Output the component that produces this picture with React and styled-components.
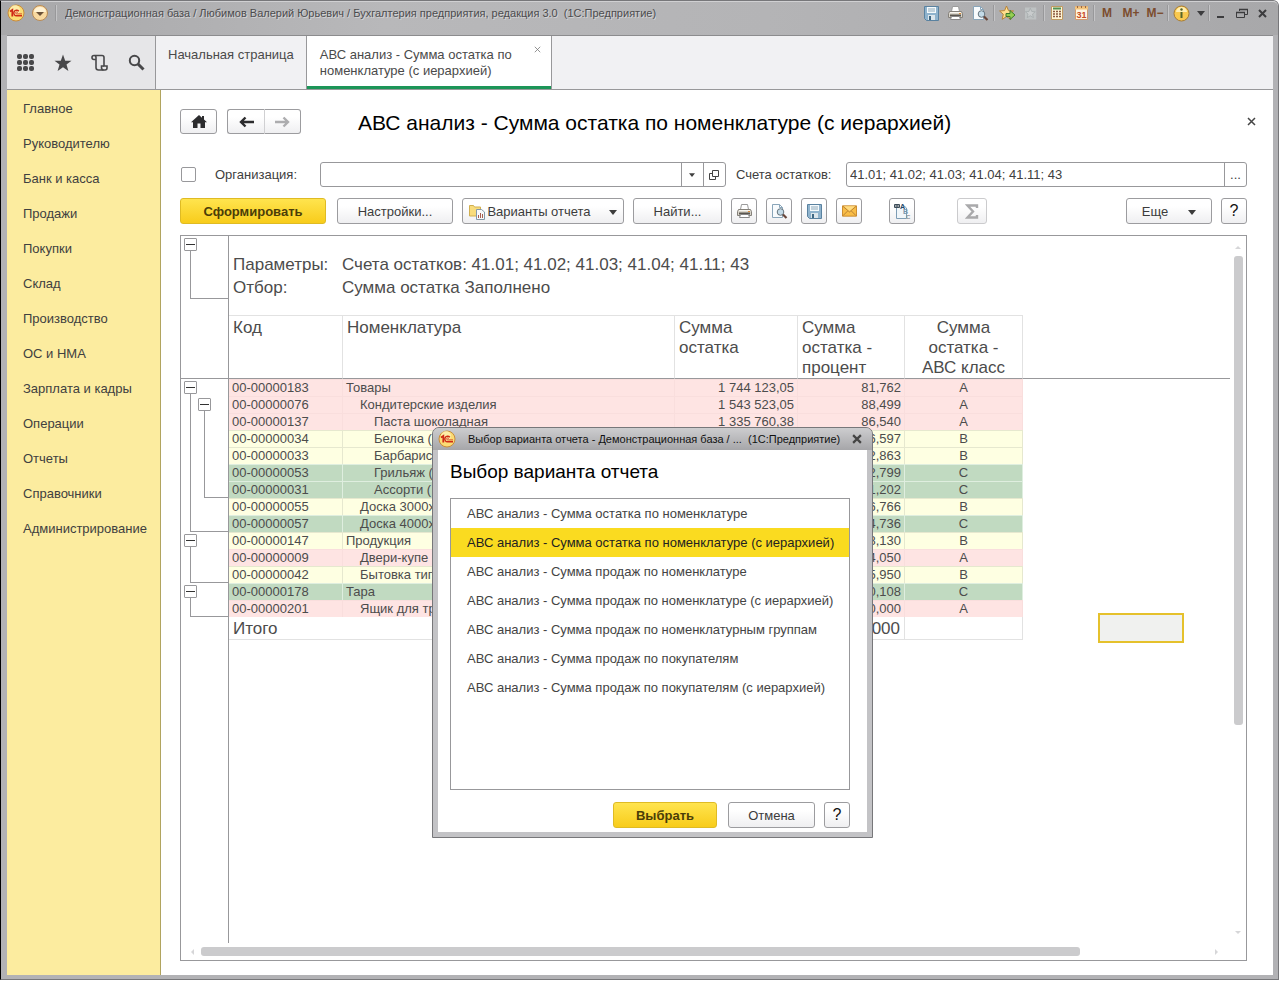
import React, { useState } from 'react';
import styled, { createGlobalStyle, css } from 'styled-components';

const GlobalStyle = createGlobalStyle`
  * {
    box-sizing: border-box;
  }

  body {
    margin: 0;
    background: #fff;
    color: #404040;
    font: 13px/16px 'Liberation Sans', Arial, sans-serif;
  }

  button,
  input {
    color: inherit;
    font: inherit;
  }
`;

const Window = styled.div`
  display: flex;
  flex-direction: column;
  min-height: calc(100vh - 4px);
  margin: 0 5px 4px 0;
  padding: 0 5px 4px 6px;
  background: #b2b2b5;
  border: 1px solid #77777a;
  border-left-color: #000;
  border-radius: 0 6px 0 0;
`;

const TitleBar = styled.header`
  display: flex;
  align-items: flex-start;
  justify-content: space-between;
  height: 34px;
  margin: 0 -5px 0 -6px;
  padding: 0 5px 0 6px;
  background: linear-gradient(90deg, #a8a8aa, #b8b8ba 30%, #b4b4b6 60%, #a8a8aa);
  border-top: 1px solid #d0d0d2;
  border-radius: 0 5px 0 0;
`;

const TitleGroup = styled.div`
  display: flex;
  align-items: center;
  height: 22px;
  min-width: 0;
`;

const WindowTitle = styled.span`
  margin-left: 8px;
  overflow: hidden;
  color: #4c4c4e;
  font-size: 11px;
  text-shadow: 1px 1px 0 #d4d4d6;
  white-space: nowrap;
`;

const TitleButton = styled.button`
  display: flex;
  flex: none;
  align-items: center;
  justify-content: center;
  width: ${({ $width }) => $width || 24}px;
  height: 22px;
  padding: 0;
  background: none;
  border: 0;
  color: #3c3c3e;
`;

const MemoryButton = styled(TitleButton)`
  color: #7b4c2e;
  font-size: 12px;
  font-weight: 700;
`;

const Separator = styled.span`
  flex: none;
  width: 2px;
  height: 16px;
  background: #98989a;
  border-right: 1px solid #c4c4c6;
`;

const TabBar = styled.nav`
  display: flex;
  height: 55px;
  background: #f1f1f3;
  border-top: 1px solid #8c8c8e;
  border-bottom: 1px solid #98989a;
`;

const QuickTools = styled.div`
  display: flex;
  align-items: center;
  width: 149px;
  background: #e6e6e8;
  border-right: 1px solid #98989a;
`;

const QuickButton = styled.button`
  display: flex;
  align-items: center;
  justify-content: center;
  width: 37px;
  height: 40px;
  padding: 0;
  background: none;
  border: 0;
  color: #48484a;
`;

const Tab = styled.a`
  display: flex;
  gap: 20px;
  align-items: flex-start;
  padding: 11px 12px;
  border-right: 1px solid #98989a;
  color: #4a4a4a;
  text-decoration: none;

  ${({ $active }) =>
    $active &&
    css`
      padding: 11px 10px 11px 13px;
      background: #fff;
      box-shadow: inset 0 -3px #1c9558;
    `}
`;

const TabText = styled.span`
  max-width: 194px;
`;

const TabClose = styled.span`
  margin-top: -6px;
  color: #777;
`;

const Body = styled.div`
  display: flex;
  flex: 1;
  background: #fff;
`;

const Sidebar = styled.nav`
  display: flex;
  flex: none;
  flex-direction: column;
  width: 154px;
  padding-top: 1px;
  background: #fcec9f;
  border-right: 1px solid #b1a45f;
`;

const SidebarLink = styled.a`
  padding-left: 16px;
  color: #404040;
  line-height: 35px;
  text-decoration: none;
`;

const Main = styled.main`
  display: flex;
  flex: 1;
  flex-direction: column;
  min-width: 0;
  padding: 19px 26px 14px 19px;
`;

const PageHeader = styled.div`
  display: flex;
  align-items: center;
  margin-right: -14px;
`;

const PageTitle = styled.h1`
  flex: 1;
  margin: 0 0 0 57px;
  padding-top: 2px;
  color: #000;
  font-size: 21px;
  font-weight: 400;
  line-height: 23px;
`;

const Button = styled.button`
  display: flex;
  flex: none;
  align-items: center;
  justify-content: center;
  gap: 2px;
  width: ${({ $width }) => $width || 26}px;
  height: ${({ $height }) => $height || 26}px;
  padding: 0;
  background: linear-gradient(#fff 30%, #efeff1);
  border: 1px solid ${({ disabled }) => (disabled ? '#cbcbcd' : '#9c9c9f')};
  border-radius: 3px;
  color: #3c3c3c;

  ${({ $primary }) =>
    $primary &&
    css`
      margin-right: 2px;
      background: linear-gradient(#ffe44e, #f8cc1b);
      border-color: #dfbb24;
      color: #4b3d08;
      font-weight: 700;
    `}
`;

const TextButton = styled(Button)`
  padding-top: 2px;
`;

const HelpButton = styled(Button)`
  color: #111;
  font-size: 16px;
`;

const HistoryButtons = styled.div`
  display: flex;
  margin-left: 10px;

  button:first-child {
    border-right-color: #d0d0d2;
    border-radius: 3px 0 0 3px;
  }

  button:last-child {
    border-color: #9c9c9f;
    border-left: 0;
    border-radius: 0 3px 3px 0;
  }
`;

const PlainButton = styled.button`
  display: flex;
  align-items: center;
  justify-content: center;
  width: 20px;
  height: 20px;
  padding: 0;
  background: none;
  border: 0;
  color: #444;
`;

const FilterRow = styled.div`
  display: flex;
  align-items: center;
  margin-top: 28px;
`;

const Checkbox = styled.input`
  width: 15px;
  height: 15px;
  margin: 0 0 0 1px;
  appearance: none;
  background: #fff;
  border: 1px solid #98989b;
  border-radius: 2px;
`;

const FieldLabel = styled.label`
  width: ${({ $width }) => $width}px;
  flex: none;
  margin-left: ${({ $gap }) => $gap}px;
`;

const Field = styled.div`
  display: flex;
  flex: ${({ $grow }) => $grow} 1 0;
  height: 25px;
  min-width: 0;
  border: 1px solid #98989b;
  border-radius: 3px;
`;

const FieldInput = styled.input`
  flex: 1;
  min-width: 0;
  padding: 0 3px;
  background: none;
  border: 0;
  outline: 0;
`;

const FieldButton = styled.button`
  display: flex;
  align-items: center;
  justify-content: center;
  width: 22px;
  padding: 0;
  background: none;
  border: 0;
  border-left: 1px solid #98989b;
`;

const Toolbar = styled.div`
  display: flex;
  align-items: center;
  gap: 9px;
  margin: 11px 0;
`;

const ToolbarGap = styled.span`
  flex: ${({ $grow }) => ($grow ? 1 : 'none')};
  width: ${({ $width }) => $width || 0}px;
`;

const DropText = styled.span`
  margin-right: ${({ $gap }) => $gap}px;
`;

const Frame = styled.section`
  display: grid;
  flex: 1;
  grid-template-rows: 1fr 17px;
  grid-template-columns: 48px 1fr 16px;
  border: 1px solid #98989b;
`;

const Gutter = styled.div`
  border-right: 1px solid #98989b;
`;

const GutterHead = styled.div`
  height: 143px;
  border-bottom: 1px solid #98989b;
`;

const Group = styled.div`
  display: flex;
  flex-direction: column;
  height: ${({ $height }) => $height}px;
  padding: 2px 0 0 ${({ $nested }) => ($nested ? 7 : 3)}px;
  margin-top: ${({ $nested }) => ($nested ? 2 : 0)}px;
`;

const Toggle = styled.button`
  display: flex;
  flex: none;
  align-items: center;
  width: 13px;
  height: 13px;
  padding: 0 1px;
  background: #fff;
  border: 1px solid #98989b;
  border-radius: 1px;

  &::before {
    width: 9px;
    height: 1px;
    background: #333;
    content: '';
  }
`;

const Branch = styled.div`
  flex: 1;
  margin-left: 6px;
  border: solid #98989b;
  border-width: 0 0 1px 1px;
`;

const Sheet = styled.div`
  position: relative;
  min-width: 0;
`;

const Params = styled.dl`
  display: grid;
  grid-template-columns: 109px 1fr;
  height: 79px;
  margin: 0;
  padding: 17px 4px;
  color: #4c4c4c;
  font-size: 17px;
  line-height: 23px;

  dd {
    margin: 0;
  }
`;

const Table = styled.table`
  width: 100%;
  border-spacing: 0;
  table-layout: fixed;
  color: #4c4c4c;
`;

const HeadCell = styled.th`
  height: 64px;
  padding: 2px 4px 0;
  border-top: 1px solid #e2e2e2;
  border-right: 1px solid #e2e2e2;
  border-bottom: 1px solid #98989b;
  font-size: 17px;
  font-weight: 400;
  line-height: 20px;
  text-align: ${({ $align }) => $align || 'left'};
  vertical-align: top;

  &:last-child {
    border-top: 0;
    border-right: 0;
  }
`;

const rowTones = {
  A: { background: '#fee4e3', line: '#f9dedd' },
  B: { background: '#feffe2', line: '#e6e8cf' },
  C: { background: '#c1dac1', line: '#dfeedf' },
};

const Row = styled.tr`
  td {
    height: 17px;
    padding: 0 3px;
    overflow: hidden;
    background: ${({ $tone }) => rowTones[$tone].background};
    border-top: 1px solid ${({ $tone }) => rowTones[$tone].line};
    border-right: 1px solid ${({ $tone }) => rowTones[$tone].line};
    line-height: 16px;
    white-space: nowrap;
  }

  td:last-child {
    background: none;
    border: 0;
  }
`;

const NameCell = styled.td`
  && {
    padding-left: ${({ $level }) => 3 + $level * 14}px;
  }
`;

const NumberCell = styled.td`
  text-align: right;
`;

const ClassCell = styled.td`
  text-align: center;
`;

const TotalRow = styled.tr`
  td {
    height: 23px;
    padding: 1px 4px 0;
    border-right: 1px solid #e2e2e2;
    border-bottom: 1px solid #e2e2e2;
    font-size: 17px;
    line-height: 21px;
  }

  td:first-child,
  td:nth-child(2) {
    border-right: 0;
  }

  td:last-child {
    border: 0;
  }
`;

const CellCursor = styled.div`
  position: absolute;
  top: 377px;
  left: 869px;
  width: 86px;
  height: 30px;
  background: #f0f1ef;
  border: 2px solid #e5c12c;
`;

const VerticalScroll = styled.div`
  display: flex;
  flex-direction: column;
  align-items: center;
  justify-content: space-between;
  padding: 8px 0 7px;
`;

const HorizontalScroll = styled.div`
  display: flex;
  grid-column: 1 / -1;
  align-items: center;
  padding: 0 26px 0 8px;
`;

const Thumb = styled.div`
  flex: ${({ $share }) => $share} 1 0;
  background: #cbcbcd;
  border-radius: 3px;
  ${({ $vertical }) => ($vertical ? 'width: 9px; margin-top: 6px;' : 'height: 9px; margin-left: 6px;')}
`;

const Track = styled.div`
  flex: ${({ $share }) => $share} 1 0;
`;

const Dialog = styled.div`
  position: absolute;
  top: 427px;
  left: 432px;
  width: 441px;
  padding: 0 5px 5px;
  background: #c3c3c6;
  border: 1px solid #77777a;
  border-radius: 7px 7px 0 0;
`;

const DialogBar = styled.div`
  display: flex;
  align-items: center;
  height: 22px;
  margin: 0 -5px;
  padding: 0 5px;
  background: linear-gradient(#cdcdcf, #a6a6a9);
  border-radius: 6px 6px 0 0;
`;

const DialogCaption = styled.span`
  flex: 1;
  margin-left: 12px;
  color: #111;
  font-size: 11px;
  white-space: pre;
`;

const DialogBody = styled.div`
  padding: 10px 17px 4px 12px;
  background: #fff;
`;

const DialogTitle = styled.h2`
  margin: 0 0 14px;
  color: #000;
  font-size: 19px;
  font-weight: 400;
  line-height: 24px;
`;

const Options = styled.ul`
  height: 292px;
  margin: 0;
  padding: 0;
  border: 1px solid #98989b;
  list-style: none;
`;

const Option = styled.li`
  padding-left: 16px;
  background: ${({ $selected }) => ($selected ? '#fadb20' : 'none')};
  color: ${({ $selected }) => ($selected ? '#222' : '#444')};
  line-height: 29px;
`;

const DialogActions = styled.div`
  display: flex;
  justify-content: flex-end;
  gap: 9px;
  margin-top: 12px;
`;

const Icon = styled.svg`
  flex: none;
`;

const LogoIcon = () => (
  <Icon width="18" height="18" viewBox="0 0 18 18">
    <circle cx="9" cy="9" r="8" fill="#fbdc74" stroke="#c98b3b" />
    <circle cx="8" cy="6" r="5" fill="#fff3bd" opacity=".7" />
    <path d="M3 7.500L5.300 6v6.500" fill="none" stroke="#cf2a16" strokeWidth="1.800" />
    <path d="M11.800 7.300A2.800 2.800 0 1 0 9.800 11.800H15" fill="none" stroke="#cf2a16" strokeWidth="1.500" />
    <path d="M10.600 8.700a1 1 0 1 0-.8 1.200H15" fill="none" stroke="#cf2a16" strokeWidth=".8" />
  </Icon>
);

const MenuIcon = () => (
  <Icon width="18" height="18" viewBox="0 0 18 18">
    <circle cx="9" cy="9" r="7.500" fill="#f8d9a0" stroke="#b98a55" />
    <path d="M3 8a6 5 0 0 1 12 0z" fill="#fff2d4" />
    <path d="M5 8h8l-4 4z" fill="#6b5138" />
  </Icon>
);

const SaveIcon = () => (
  <Icon width="17" height="17" viewBox="0 0 17 17">
    <path d="M1.500 1.500h14v14h-12l-2-2z" fill="#8fb3cd" stroke="#5a82a0" />
    <path d="M4 2h9v6H4z" fill="#f5fafc" />
    <path d="M5 4h7M5 6h7" stroke="#8fa9ba" />
    <path d="M5 10h7v5H5z" fill="#dce6ec" />
    <path d="M6 11h2v4H6z" fill="#3f6884" />
  </Icon>
);

const PrintIcon = () => (
  <Icon width="17" height="17" viewBox="0 0 17 17">
    <path d="M4.500 6.500l1-5h6l1 5" fill="#fff" stroke="#9b9b9b" />
    <path d="M2.500 6.500h12l1 2v4h-14v-4z" fill="#d9d5cb" stroke="#85817a" />
    <path d="M3 7.500h11" stroke="#f7f5ef" />
    <path d="M3 10.500h11" stroke="#5b564f" strokeWidth="2" />
    <path d="M4.500 11.500h8l1 3h-10z" fill="#fff" stroke="#888" />
    <path d="M12 8.500h2" stroke="#dc8a35" />
  </Icon>
);

const PreviewIcon = () => (
  <Icon width="17" height="17" viewBox="0 0 17 17">
    <path d="M1.500 1.500h7l3 3v10h-10z" fill="#f8fbfd" stroke="#89a5b9" />
    <path d="M8.500 1.500v3h3" fill="none" stroke="#89a5b9" />
    <circle cx="9.500" cy="9" r="3.300" fill="#c4dbe8" stroke="#65737c" />
    <path d="M12 11.500l3.500 3.500" stroke="#684538" strokeWidth="2.200" />
  </Icon>
);

const starPath = 'M7.500 1l2 4.600 5 .4-3.800 3.300 1.200 5-4.400-2.700-4.300 2.700 1.100-5L.600 6l5-.4z';

const AddFavoriteIcon = () => (
  <Icon width="17" height="17" viewBox="0 0 17 17">
    <path d={starPath} fill="#ffdf8e" stroke="#b98337" />
    <path d="M7 8.500h4v-3l5 4.500-5 4.500v-3H7z" fill="#95cf51" stroke="#3f792d" />
  </Icon>
);

const FavoritesIcon = () => (
  <Icon width="12" height="13" viewBox="0 0 17 17">
    <path d="M0 0h16v17H0z" fill="#bec2c3" />
    <path d={starPath} fill="#c9cccd" stroke="#a3a8a9" />
  </Icon>
);

const CalcIcon = () => (
  <Icon width="14" height="16" viewBox="0 0 14 16">
    <path d="M1.500 1.500h11v13h-11z" fill="#fff6d6" stroke="#c09a62" />
    <path d="M3 3.500h8" stroke="#509154" strokeWidth="2" />
    <path d="M3 6.500h8M3 9h8M3 11.500h8" stroke="#8a5740" strokeWidth="1.500" strokeDasharray="2 1" />
  </Icon>
);

const CalendarIcon = () => (
  <Icon width="15" height="16" viewBox="0 0 15 16">
    <path d="M1.500 1.500h12v13h-12z" fill="#fff6e2" stroke="#d09a70" />
    <path d="M1 3h13" stroke="#f3c47c" strokeWidth="3" />
    <path d="M3.500 1v2M7.500 1v2M11.500 1v2" stroke="#9a6641" />
    <text x="7.500" y="13" textAnchor="middle" fontFamily="Liberation Sans" fontSize="9" fontWeight="700" fill="#c74a28">31</text>
  </Icon>
);

const InfoIcon = () => (
  <Icon width="17" height="17" viewBox="0 0 17 17">
    <circle cx="8.500" cy="8.500" r="7.500" fill="#f9c94f" stroke="#a77c35" />
    <path d="M3 7a5.500 5 0 0 1 11 0z" fill="#ffeeb2" />
    <circle cx="8.500" cy="4.500" r="1.200" fill="#55652c" />
    <path d="M8.500 7v6" stroke="#55652c" strokeWidth="2" />
  </Icon>
);

const CaretIcon = ({ width = 8 }) => (
  <Icon width={width} height={width / 2 + 1} viewBox="0 0 8 5">
    <path d="M0 0h8L4 5z" fill="currentColor" />
  </Icon>
);

const MinimizeIcon = () => (
  <Icon width="9" height="11" viewBox="0 0 9 11">
    <path d="M1 9h7" stroke="currentColor" strokeWidth="2" />
  </Icon>
);

const RestoreIcon = () => (
  <Icon width="12" height="11" viewBox="0 0 12 11">
    <path d="M3.500 3V1.500h8v5H9" fill="none" stroke="currentColor" />
    <path d="M3 1.500h9M0 4.500h9" stroke="currentColor" strokeWidth="1.500" />
    <path d="M.500 4.500h8v5h-8z" fill="none" stroke="currentColor" />
  </Icon>
);

const CloseIcon = ({ size = 9, weight = 2 }) => (
  <Icon width={size} height={size} viewBox="0 0 9 9">
    <path d="M1 1l7 7M8 1L1 8" stroke="currentColor" strokeWidth={weight} />
  </Icon>
);

const AppsIcon = () => (
  <Icon width="18" height="18" viewBox="0 0 18 18" fill="currentColor">
    {[3, 9, 15].map((y) => [3, 9, 15].map((x) => (
      <rect key={`${x}-${y}`} x={x - 3} y={y - 3} width="5" height="5" rx="2" />
    )))}
  </Icon>
);

const StarIcon = () => (
  <Icon width="18" height="18" viewBox="0 0 18 18">
    <path d="M9 .5l2.200 6.200h6.300l-5 3.900 1.900 6.400L9 13.200 3.600 17l1.900-6.400-5-3.900h6.300z" fill="currentColor" />
  </Icon>
);

const HistoryIcon = () => (
  <Icon width="18" height="18" viewBox="0 0 18 18" fill="none" stroke="currentColor" strokeWidth="1.600">
    <path d="M5 5.500H3A2 2 0 0 1 3 1.500h8q2 0 2 2V12h3v2a2 2 0 0 1-2 2H7.500q-2.500 0-2.500-2.500V3.500Q5 1.500 3 1.500" />
    <path d="M13 12h-2.500v1.500q0 2.500 2 2.500" />
  </Icon>
);

const SearchIcon = () => (
  <Icon width="17" height="17" viewBox="0 0 17 17" fill="none" stroke="currentColor">
    <circle cx="6.500" cy="6.500" r="4.700" strokeWidth="2" />
    <path d="M10 10l5.500 5.500" strokeWidth="3" />
  </Icon>
);

const HomeIcon = () => (
  <Icon width="16" height="14" viewBox="0 0 16 14">
    <path d="M8 0l3 2.700V1h2v3.500L16 7.300h-2V13H9.500V8.500h-3V13H2V7.300H0z" fill="#2c2c2e" />
  </Icon>
);

const ArrowIcon = ({ forward }) => (
  <Icon width="15" height="12" viewBox="0 0 15 12">
    <path
      d={forward ? 'M0 6h12M8.500 1.500L13 6l-4.500 4.500' : 'M15 6H3M6.500 1.500L2 6l4.500 4.500'}
      fill="none"
      stroke={forward ? '#adadaf' : '#2c2c2e'}
      strokeWidth="2.400"
    />
  </Icon>
);

const OpenIcon = () => (
  <Icon width="10" height="10" viewBox="0 0 10 10">
    <path d="M3.500.500h6v6h-6zM3.500 3.500h-3v6h6v-3" fill="none" stroke="#444" />
  </Icon>
);

const VariantsIcon = () => (
  <Icon width="16" height="16" viewBox="0 0 16 16">
    <path d="M.500 1.500h4l1 1.500h6v9h-11z" fill="#f8dc7c" stroke="#d0af50" />
    <path d="M7.500 5.500h5l3 2.500v7.500h-8z" fill="#f7f9fb" stroke="#8398a8" />
    <path d="M9.500 14v-3M11.500 14V9M13.500 14v-4" stroke="#a65d51" />
  </Icon>
);

const MailIcon = () => (
  <Icon width="15" height="12" viewBox="0 0 16 12">
    <path d="M.500.500h15v11H.500z" fill="#f9bd46" stroke="#c98626" />
    <path d="M1 1l7 6 7-6M1 11l5-5M15 11l-5-5" fill="none" stroke="#b57f35" />
    <path d="M2 1h12L8 6z" fill="#ffdc83" />
  </Icon>
);

const StructureIcon = () => (
  <Icon width="17" height="17" viewBox="0 0 17 17">
    <path d="M2.500 5v10.500h10V5L9 2" fill="#f0f6fa" stroke="#7d9db5" />
    <path d="M.500 1.500h5v3h-5zM3 1v4M0 3h6" fill="none" stroke="#3d4c58" />
    <g fontFamily="Liberation Sans" fontWeight="700">
      <text x="6" y="6" fontSize="7" fill="#25486b">A</text>
      <text x="9" y="11" fontSize="7" fill="#7896ac">B</text>
      <text x="12" y="16" fontSize="6" fill="#8a9298">C</text>
    </g>
  </Icon>
);

const SigmaIcon = () => (
  <Icon width="14" height="15" viewBox="0 0 14 15">
    <path d="M12 4V1.500H2.500L8 7.500l-5.500 6H12V11" fill="none" stroke="#a9a9ab" strokeWidth="2.400" />
  </Icon>
);

const ScrollArrow = ({ direction }) => (
  <Icon width="6" height="6" viewBox="0 0 6 6">
    <path
      d={{
        up: 'M0 5h6L3 2z',
        down: 'M0 1h6L3 4z',
        left: 'M5 0v6L2 3z',
        right: 'M1 0v6l3-3z',
      }[direction]}
      fill="#d6d6d8"
    />
  </Icon>
);

const sections = [
  'Главное',
  'Руководителю',
  'Банк и касса',
  'Продажи',
  'Покупки',
  'Склад',
  'Производство',
  'ОС и НМА',
  'Зарплата и кадры',
  'Операции',
  'Отчеты',
  'Справочники',
  'Администрирование',
];

const rows = [
  { code: '00-00000183', name: 'Товары', level: 0, sum: '1 744 123,05', percent: '81,762', grade: 'A' },
  { code: '00-00000076', name: 'Кондитерские изделия', level: 1, sum: '1 543 523,05', percent: '88,499', grade: 'A' },
  { code: '00-00000137', name: 'Паста шоколадная', level: 2, sum: '1 335 760,38', percent: '86,540', grade: 'A' },
  { code: '00-00000034', name: 'Белочка (', level: 2, percent: '6,597', grade: 'B' },
  { code: '00-00000033', name: 'Барбарис', level: 2, percent: '2,863', grade: 'B' },
  { code: '00-00000053', name: 'Грильяж (', level: 2, percent: '2,799', grade: 'C' },
  { code: '00-00000031', name: 'Ассорти (', level: 2, percent: '1,202', grade: 'C' },
  { code: '00-00000055', name: 'Доска 3000х', level: 1, percent: '6,766', grade: 'B' },
  { code: '00-00000057', name: 'Доска 4000х', level: 1, percent: '4,736', grade: 'C' },
  { code: '00-00000147', name: 'Продукция', level: 0, percent: '18,130', grade: 'B' },
  { code: '00-00000009', name: 'Двери-купе', level: 1, percent: '84,050', grade: 'A' },
  { code: '00-00000042', name: 'Бытовка тип', level: 1, percent: '15,950', grade: 'B' },
  { code: '00-00000178', name: 'Тара', level: 0, percent: '0,108', grade: 'C' },
  { code: '00-00000201', name: 'Ящик для тр', level: 1, percent: '100,000', grade: 'A' },
];

const variants = [
  'АВС анализ - Сумма остатка по номенклатуре',
  'АВС анализ - Сумма остатка по номенклатуре (с иерархией)',
  'АВС анализ - Сумма продаж по номенклатуре',
  'АВС анализ - Сумма продаж по номенклатуре (с иерархией)',
  'АВС анализ - Сумма продаж по номенклатурным группам',
  'АВС анализ - Сумма продаж по покупателям',
  'АВС анализ - Сумма продаж по покупателям (с иерархией)',
];

const ApplicationBar = () => (
  <TitleBar>
    <TitleGroup>
      <TitleButton $width={18} aria-label="1С"><LogoIcon /></TitleButton>
      <TitleButton $width={30} aria-label="Главное меню"><MenuIcon /></TitleButton>
      <Separator />
      <WindowTitle>
        Демонстрационная база / Любимов Валерий Юрьевич / Бухгалтерия предприятия, редакция 3.0&nbsp; (1С:Предприятие)
      </WindowTitle>
    </TitleGroup>
    <TitleGroup>
      <TitleButton aria-label="Сохранить"><SaveIcon /></TitleButton>
      <TitleButton aria-label="Печать"><PrintIcon /></TitleButton>
      <TitleButton $width={26} aria-label="Просмотр"><PreviewIcon /></TitleButton>
      <Separator />
      <TitleButton aria-label="Добавить в избранное"><AddFavoriteIcon /></TitleButton>
      <TitleButton aria-label="Избранное"><FavoritesIcon /></TitleButton>
      <Separator />
      <TitleButton aria-label="Калькулятор"><CalcIcon /></TitleButton>
      <TitleButton aria-label="Календарь"><CalendarIcon /></TitleButton>
      <Separator />
      <MemoryButton>M</MemoryButton>
      <MemoryButton>M+</MemoryButton>
      <MemoryButton>M−</MemoryButton>
      <Separator />
      <TitleButton aria-label="Справка"><InfoIcon /></TitleButton>
      <TitleButton $width={15} aria-label="Еще"><CaretIcon /></TitleButton>
      <Separator />
      <TitleButton $width={21} aria-label="Свернуть"><MinimizeIcon /></TitleButton>
      <TitleButton $width={21} aria-label="Развернуть"><RestoreIcon /></TitleButton>
      <TitleButton $width={21} aria-label="Закрыть"><CloseIcon /></TitleButton>
    </TitleGroup>
  </TitleBar>
);

const ReportTable = () => (
  <Table>
    <colgroup>
      <col width="114" />
      <col width="332" />
      <col width="123" />
      <col width="107" />
      <col width="118" />
      <col />
    </colgroup>
    <thead>
      <tr>
        <HeadCell>Код</HeadCell>
        <HeadCell>Номенклатура</HeadCell>
        <HeadCell>Сумма остатка</HeadCell>
        <HeadCell>Сумма остатка - процент</HeadCell>
        <HeadCell $align="center">Сумма остатка - АВС класс</HeadCell>
        <HeadCell as="td" />
      </tr>
    </thead>
    <tbody>
      {rows.map((row) => (
        <Row key={row.code} $tone={row.grade}>
          <td>{row.code}</td>
          <NameCell $level={row.level}>{row.name}</NameCell>
          <NumberCell>{row.sum}</NumberCell>
          <NumberCell>{row.percent}</NumberCell>
          <ClassCell>{row.grade}</ClassCell>
          <td />
        </Row>
      ))}
      <TotalRow>
        <td>Итого</td>
        <td />
        <td />
        <NumberCell>100,000</NumberCell>
        <td />
        <td />
      </TotalRow>
    </tbody>
  </Table>
);

const Report = () => (
  <Frame>
    <Gutter>
      <GutterHead>
        <Group $height={63}>
          <Toggle aria-label="Свернуть параметры" />
          <Branch />
        </Group>
      </GutterHead>
      <Group $height={153}>
        <Toggle aria-label="Свернуть Товары" />
        <Branch>
          <Group $nested $height={102}>
            <Toggle aria-label="Свернуть Кондитерские изделия" />
            <Branch />
          </Group>
        </Branch>
      </Group>
      <Group $height={51}>
        <Toggle aria-label="Свернуть Продукция" />
        <Branch />
      </Group>
      <Group $height={34}>
        <Toggle aria-label="Свернуть Тара" />
        <Branch />
      </Group>
    </Gutter>
    <Sheet>
      <Params>
        <dt>Параметры:</dt>
        <dd>Счета остатков: 41.01; 41.02; 41.03; 41.04; 41.11; 43</dd>
        <dt>Отбор:</dt>
        <dd>Сумма остатка Заполнено</dd>
      </Params>
      <ReportTable />
      <CellCursor />
    </Sheet>
    <VerticalScroll>
      <ScrollArrow direction="up" />
      <Thumb $vertical $share={467} />
      <Track $share={204} />
      <ScrollArrow direction="down" />
    </VerticalScroll>
    <HorizontalScroll>
      <ScrollArrow direction="left" />
      <Thumb $share={879} />
      <Track $share={134} />
      <ScrollArrow direction="right" />
    </HorizontalScroll>
  </Frame>
);

const VariantDialog = () => {
  const [selected, setSelected] = useState(1);

  return (
    <Dialog role="dialog" aria-labelledby="variant-title">
      <DialogBar>
        <LogoIcon />
        <DialogCaption>{'Выбор варианта отчета - Демонстрационная база / ...  (1С:Предприятие)'}</DialogCaption>
        <PlainButton aria-label="Закрыть окно"><CloseIcon size={10} /></PlainButton>
      </DialogBar>
      <DialogBody>
        <DialogTitle id="variant-title">Выбор варианта отчета</DialogTitle>
        <Options role="listbox" aria-labelledby="variant-title">
          {variants.map((variant, index) => (
            <Option
              key={variant}
              role="option"
              aria-selected={index === selected}
              $selected={index === selected}
              onClick={() => setSelected(index)}
            >
              {variant}
            </Option>
          ))}
        </Options>
        <DialogActions>
          <TextButton $primary $width={104}>Выбрать</TextButton>
          <TextButton $width={87}>Отмена</TextButton>
          <HelpButton>?</HelpButton>
        </DialogActions>
      </DialogBody>
    </Dialog>
  );
};

const App = () => (
  <>
    <GlobalStyle />
    <Window>
      <ApplicationBar />
      <TabBar>
        <QuickTools>
          <QuickButton aria-label="Разделы"><AppsIcon /></QuickButton>
          <QuickButton aria-label="Избранное"><StarIcon /></QuickButton>
          <QuickButton aria-label="История"><HistoryIcon /></QuickButton>
          <QuickButton aria-label="Поиск"><SearchIcon /></QuickButton>
        </QuickTools>
        <Tab href="#home">Начальная страница</Tab>
        <Tab href="#report" $active>
          <TabText>АВС анализ - Сумма остатка по номенклатуре (с иерархией)</TabText>
          <TabClose><CloseIcon size={7} weight={1} /></TabClose>
        </Tab>
      </TabBar>
      <Body>
        <Sidebar>
          {sections.map((section) => (
            <SidebarLink key={section} href="#section">{section}</SidebarLink>
          ))}
        </Sidebar>
        <Main>
          <PageHeader>
            <Button $width={37} $height={25} aria-label="Домой"><HomeIcon /></Button>
            <HistoryButtons>
              <Button $width={38} $height={25} aria-label="Назад"><ArrowIcon /></Button>
              <Button $width={36} $height={25} aria-label="Вперед" disabled><ArrowIcon forward /></Button>
            </HistoryButtons>
            <PageTitle>АВС анализ - Сумма остатка по номенклатуре (с иерархией)</PageTitle>
            <PlainButton aria-label="Закрыть отчет"><CloseIcon weight={1.5} /></PlainButton>
          </PageHeader>
          <FilterRow>
            <Checkbox type="checkbox" id="use-organization" aria-label="Отбор по организации" />
            <FieldLabel $gap={19} $width={105} htmlFor="organization">Организация:</FieldLabel>
            <Field $grow={406}>
              <FieldInput id="organization" />
              <FieldButton aria-label="Выбрать организацию"><CaretIcon width={6} /></FieldButton>
              <FieldButton aria-label="Открыть организацию"><OpenIcon /></FieldButton>
            </Field>
            <FieldLabel $gap={10} $width={110} htmlFor="accounts">Счета остатков:</FieldLabel>
            <Field $grow={401}>
              <FieldInput id="accounts" defaultValue="41.01; 41.02; 41.03; 41.04; 41.11; 43" />
              <FieldButton aria-label="Выбрать счета">...</FieldButton>
            </Field>
          </FilterRow>
          <Toolbar>
            <TextButton $primary $width={146}>Сформировать</TextButton>
            <TextButton $width={116}>Настройки...</TextButton>
            <TextButton $width={162}>
              <VariantsIcon />
              <DropText $gap={16}>Варианты отчета</DropText>
              <CaretIcon />
            </TextButton>
            <TextButton $width={89}>Найти...</TextButton>
            <Button aria-label="Печать"><PrintIcon /></Button>
            <Button aria-label="Просмотр"><PreviewIcon /></Button>
            <Button aria-label="Сохранить"><SaveIcon /></Button>
            <Button aria-label="Отправить"><MailIcon /></Button>
            <ToolbarGap $width={9} />
            <Button aria-label="Структура"><StructureIcon /></Button>
            <ToolbarGap $width={24} />
            <Button $width={30} disabled aria-label="Сумма"><SigmaIcon /></Button>
            <ToolbarGap $grow />
            <TextButton $width={86}>
              <DropText $gap={18}>Еще</DropText>
              <CaretIcon />
            </TextButton>
            <HelpButton>?</HelpButton>
          </Toolbar>
          <Report />
        </Main>
      </Body>
    </Window>
    <VariantDialog />
  </>
);

export default App;
